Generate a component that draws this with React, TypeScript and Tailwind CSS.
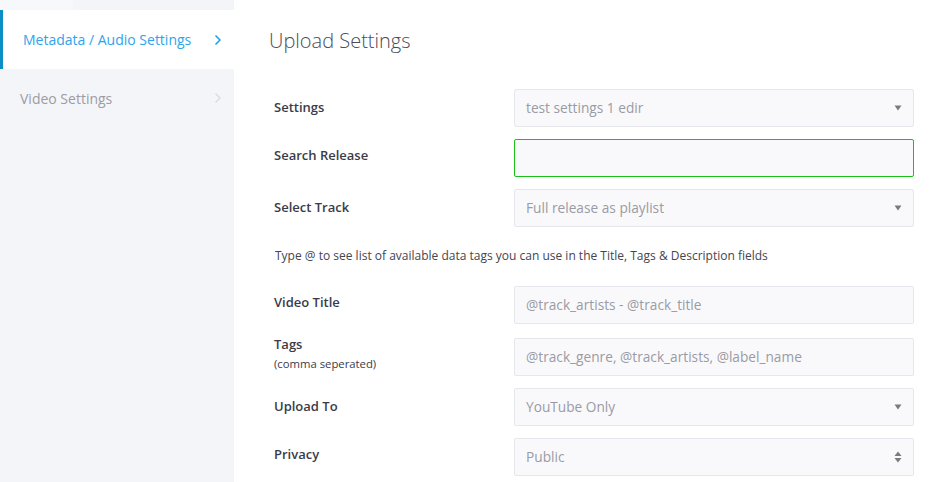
import { ChevronRight } from "lucide-react";

const font = { fontFamily: '"Open Sans", "Noto Sans", sans-serif' };

function Caret({ double }: { double?: boolean }) {
  if (double) {
    return (
      <svg width="8" height="12" viewBox="0 0 8 12" className="shrink-0">
        <path d="M0.5 5 L4 0.5 L7.5 5 Z" fill="#7a7a80" />
        <path d="M0.5 7 L4 11.5 L7.5 7 Z" fill="#7a7a80" />
      </svg>
    );
  }
  return (
    <svg width="8" height="6" viewBox="0 0 8 6" className="shrink-0">
      <path d="M0.5 0.5 L7.5 0.5 L4 5.5 Z" fill="#7a7a80" />
    </svg>
  );
}

function Field({
  value,
  select,
  double,
  focused,
}: {
  value?: string;
  select?: boolean;
  double?: boolean;
  focused?: boolean;
}) {
  return (
    <div
      className={`flex h-[38px] w-[400px] items-center justify-between rounded-[2px] border bg-[#f9f9fb] pl-[11px] pr-[11px] text-[13.7px] text-[#9a9ba4] ${
        focused ? "border-[#19c119]" : "border-[#e6e7ec]"
      }`}
    >
      <span className="pt-[1px]">{value}</span>
      {select && <Caret double={double} />}
    </div>
  );
}

function Row({
  label,
  sub,
  children,
  className = "",
  labelClass = "pt-[9px]",
}: {
  label: string;
  sub?: string;
  children: React.ReactNode;
  className?: string;
  labelClass?: string;
}) {
  return (
    <div className={`flex items-start ${className}`}>
      <div className={`w-[240px] ${labelClass}`}>
        <div className="text-[13px] font-semibold leading-[18px] text-[#3a3b4a]">{label}</div>
        {sub && <div className="mt-[3px] text-[11.3px] leading-[16px] text-[#3a3b4a]">{sub}</div>}
      </div>
      {children}
    </div>
  );
}

export default function App() {
  return (
    <div className="flex h-[482px] w-[933px] overflow-hidden bg-white" style={font}>
      {/* Sidebar */}
      <div className="flex w-[234px] shrink-0 flex-col bg-[#f4f5f9]">
        <div className="h-[10px] w-[73px] bg-[#f7f8fb]" />
        <div className="flex h-[59px] items-center justify-between border-l-[3px] border-[#0b8ec3] bg-white pl-[20px] pr-[8px]">
          <span className="text-[14px] text-[#2ea4ec]">Metadata / Audio Settings</span>
          <ChevronRight size={16} strokeWidth={2.5} className="text-[#1aa1ee]" />
        </div>
        <div className="flex h-[58px] items-center justify-between pl-[20px] pr-[8px]">
          <span className="text-[14px] text-[#9c9ca4]">Video Settings</span>
          <ChevronRight size={16} strokeWidth={2} className="text-[#d9dbe2]" />
        </div>
      </div>

      {/* Main */}
      <div className="flex-1 pl-[35px]">
        <h1 className="mt-[27px] text-[20px] font-light leading-[28px] text-[#4a4b5a]">Upload Settings</h1>

        <div className="mt-[34px] flex flex-col pl-[5px]">
          <Row label="Settings">
            <Field value="test settings 1 edir" select />
          </Row>
          <Row label="Search Release" className="mt-[12px]" labelClass="pt-[7px]">
            <Field focused />
          </Row>
          <Row label="Select Track" className="mt-[12px]">
            <Field value="Full release as playlist" select />
          </Row>

          <p className="mt-[20px] pl-[1px] text-[12px] leading-[17px] text-[#44454f]">
            Type @ to see list of available data tags you can use in the Title, Tags &amp; Description fields
          </p>

          <Row label="Video Title" className="mt-[22px]" labelClass="pt-[7px]">
            <Field value="@track_artists - @track_title" />
          </Row>
          <Row label="Tags" sub="(comma seperated)" className="mt-[14px]" labelClass="-mt-[3px]">
            <Field value="@track_genre, @track_artists, @label_name" />
          </Row>
          <Row label="Upload To" className="mt-[12px]">
            <Field value="YouTube Only" select />
          </Row>
          <Row label="Privacy" className="mt-[12px]" labelClass="pt-[7px]">
            <Field value="Public" select double />
          </Row>
        </div>
      </div>
    </div>
  );
}
